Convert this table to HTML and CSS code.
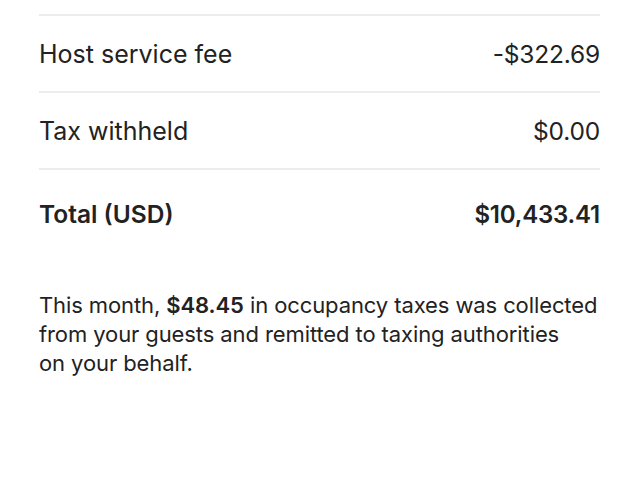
FILE: index.html
```html
<!DOCTYPE html>
<html>
<head>
<meta charset="utf-8">
<link rel="stylesheet" href="styles.css">
</head>
<body>
<div class="page">
  <div class="rows">
    <div class="row"><span>Host service fee</span><span>-$322.69</span></div>
    <div class="row"><span>Tax withheld</span><span>$0.00</span></div>
    <div class="row total"><span>Total (USD)</span><span>$10,433.41</span></div>
  </div>
  <p class="note">This month, <b>$48.45</b> in occupancy taxes was collected from your guests and remitted to taxing authorities<br>on your behalf.</p>
</div>
</body>
</html>
```
FILE: styles.css
```css
html, body { margin: 0; padding: 0; background: #fff; }
body { font-family: Inter, "Noto Sans", sans-serif; color: #222; }
.page { padding: 14px 40px 0 39px; }
.rows { border-top: 2px solid #ececec; }
.row {
  display: flex; justify-content: space-between; align-items: center;
  height: 75px; border-bottom: 2px solid #ececec;
  font-size: 25px; letter-spacing: 0;
}
.row span:last-child { font-size: 24.5px; letter-spacing: -0.2px; }
.row.total { border-bottom: none; font-weight: 600; height: 88px; font-size: 24.5px; }
.row.total span:last-child { font-size: 24px; }
.note { margin: 33px 0 0; font-size: 22px; line-height: 29px; letter-spacing: -0.1px; }
.note b { font-weight: 600; }
```
